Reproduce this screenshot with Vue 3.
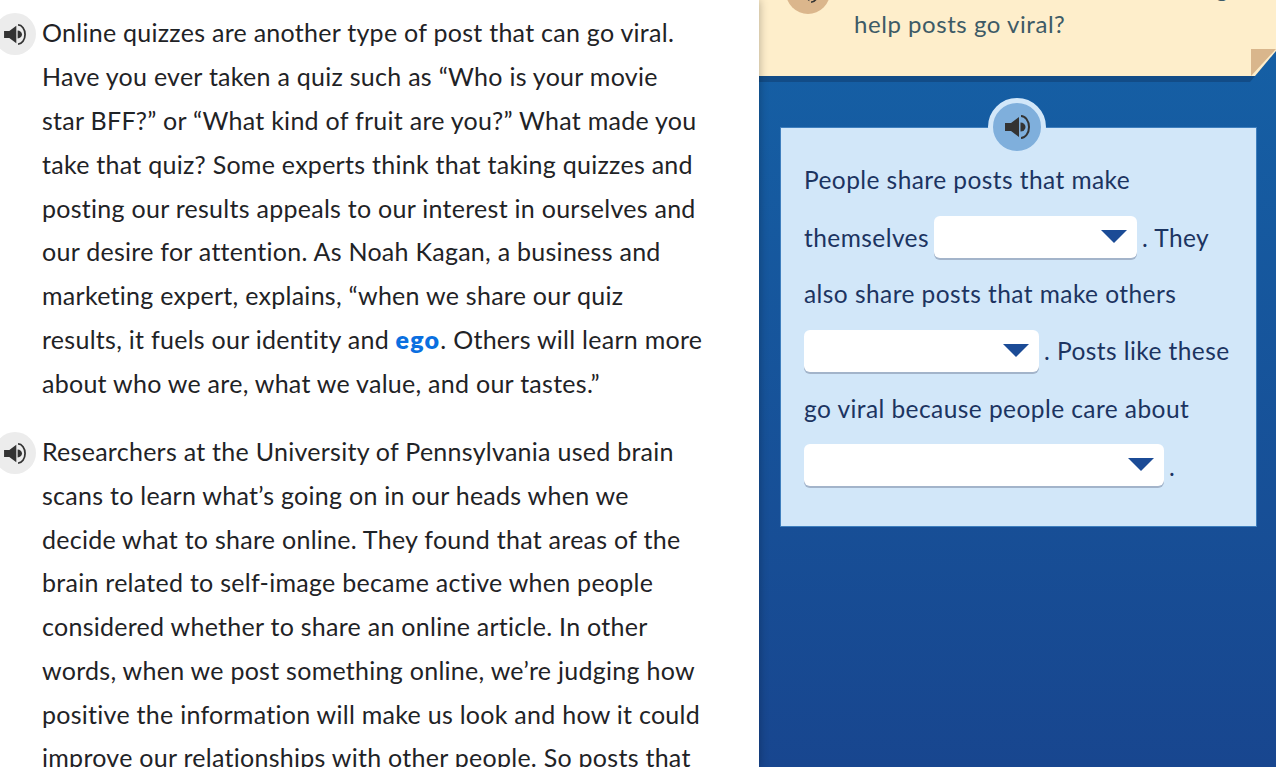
<script setup>
const paragraphs = [
  [
    ['Online quizzes are another type of post that can go viral.'],
    ['Have you ever taken a quiz such as “Who is your movie'],
    ['star BFF?” or “What kind of fruit are you?” What made you'],
    ['take that quiz? Some experts think that taking quizzes and'],
    ['posting our results appeals to our interest in ourselves and'],
    ['our desire for attention. As Noah Kagan, a business and'],
    ['marketing expert, explains, “when we share our quiz'],
    ['results, it fuels our identity and ', 'ego', '. Others will learn more'],
    ['about who we are, what we value, and our tastes.”'],
  ],
  [
    ['Researchers at the University of Pennsylvania used brain'],
    ['scans to learn what’s going on in our heads when we'],
    ['decide what to share online. They found that areas of the'],
    ['brain related to self-image became active when people'],
    ['considered whether to share an online article. In other'],
    ['words, when we post something online, we’re judging how'],
    ['positive the information will make us look and how it could'],
    ['improve our relationships with other people. So posts that'],
  ],
]
const cone = 'M0 8h6l8-6v20l-8-6H0z'
const inner = 'M15.500 7.500a5 4.500 0 0 1 0 9z'
const outer = 'M16 1A8 11 0 0 1 16 23'
</script>

<template>
  <div class="page">
    <main class="reading">
      <div v-for="(lines, i) in paragraphs" :key="i" class="para">
        <button class="audio" type="button" aria-label="Listen">
          <svg viewBox="0 0 25 24" class="spk small"><path :d="cone" /><path :d="inner" /><path class="wave" :d="outer" /></svg>
        </button>
        <p class="text">
          <span v-for="(line, j) in lines" :key="j" class="line">{{ line[0] }}<b v-if="line[1]" class="term">{{ line[1] }}</b>{{ line[2] }}</span>
        </p>
      </div>
    </main>
    <aside class="side">
      <div class="note-wrap">
        <div class="note">
          <div class="note-icon">
            <svg viewBox="0 0 25 24" class="spk small"><path :d="cone" /><path :d="inner" /><path class="wave" :d="outer" /></svg>
          </div>
          <p class="note-text">
            <span class="line">What other emotions or ideas might</span>
            <span class="line">help posts go viral?</span>
          </p>
        </div>
        <div class="fold"></div>
      </div>
      <section class="card">
        <div class="card-audio">
          <svg viewBox="0 0 25 24" class="spk"><path :d="cone" /><path :d="inner" /><path class="wave" :d="outer" /></svg>
        </div>
        <div class="row r1">People share posts that make</div>
        <div class="row r2"><span class="up1">themselves</span><span class="select w1"><i></i></span><span class="up1">. They</span></div>
        <div class="row r3">also share posts that make others</div>
        <div class="row r4"><span class="select w2"><i></i></span><span class="up2">. Posts like these</span></div>
        <div class="row r5">go viral because people care about</div>
        <div class="row r6"><span class="select w3"><i></i></span><span>.</span></div>
      </section>
    </aside>
  </div>
</template>

<style>
html, body { margin: 0; overflow: hidden; background: #fff; }
</style>

<style scoped>
.page {
  display: flex;
  width: 1276px;
  height: 767px;
  overflow: hidden;
  font-family: Lato, "Noto Sans", sans-serif;
  font-size: 25px;
}
.reading {
  width: 759px;
  height: 767px;
  flex: none;
  box-sizing: border-box;
  padding-top: 11px;
  overflow: hidden;
  box-shadow: 0 0 9px rgba(0, 0, 0, .3);
  position: relative;
  z-index: 1;
  background: #fff;
}
.para { display: flex; gap: 6px; margin: 0 0 24.500px -6px; }
.audio {
  flex: none;
  width: 42px;
  height: 42px;
  margin-top: 2px;
  border: 0;
  padding: 0;
  border-radius: 50%;
  background: #ececec;
  display: flex;
  align-items: center;
  justify-content: center;
}
.spk { width: 25px; height: 24px; fill: #333; }
.spk.small { width: 22px; height: 21px; }
.wave { fill: none; stroke: #333; stroke-width: 2; }
.text { margin: 0; color: #1f2326; line-height: 43.880px; letter-spacing: .27px; }
.para + .para .text { line-height: 43.700px; }
.line { display: block; white-space: nowrap; }
.term { color: #0a6fe0; font-weight: 800; letter-spacing: 1.200px; }

.side {
  flex: 1;
  height: 767px;
  overflow: hidden;
  background: linear-gradient(#1561a6, #18468f);
}
.note-wrap {
  position: relative;
  height: 82px;
  background: #124c87;
  clip-path: polygon(0 0, 100% 0, 100% 51px, 491px 82px, 0 82px);
}
.note { display: flex; height: 76px; background: #feeecb; }
.note-icon {
  position: absolute;
  left: 27px;
  top: -30px;
  width: 44px;
  height: 44px;
  border-radius: 50%;
  background: #dbb68c;
  display: flex;
  align-items: center;
  justify-content: center;
}
.note-text {
  margin: -30px 0 0 95px;
  color: #3d5a66;
  line-height: 36px;
  font-size: 24px;
  letter-spacing: .55px;
}
.fold {
  position: absolute;
  right: 0;
  top: 49px;
  width: 25px;
  height: 27px;
  background: #d9b68c;
  clip-path: polygon(0 0, 100% 0, 0 100%);
}
.card {
  position: relative;
  width: 477px;
  height: 400px;
  margin: 45px 0 0 21px;
  box-sizing: border-box;
  border: 1px solid #3f7fbe;
  background: #d2e7f9;
  color: #1c3461;
  padding: 29px 0 0 23px;
  letter-spacing: .43px;
  font-size: 24.500px;
}
.card-audio {
  position: absolute;
  left: 207px;
  top: -30px;
  width: 48px;
  height: 48px;
  border: 5px solid #d2e7f9;
  border-radius: 50%;
  background: #7fafdc;
  display: flex;
  align-items: center;
  justify-content: center;
}
.row { display: flex; align-items: center; gap: 5px; white-space: pre; height: 44px; }
.r2 { margin-top: 15px; }
.r3 { margin-top: 11px; }
.r4 { margin-top: 15px; }
.r5 { margin-top: 12px; }
.r6 { margin-top: 14px; }
.up1 { margin-bottom: 2px; }
.up2 { margin-bottom: 3px; }
.select {
  position: relative;
  display: block;
  height: 42px;
  align-self: flex-start;
  flex: none;
  background: #fff;
  border-radius: 6px;
  box-shadow: 0 2px 0 #a3b4ca;
}
.select i {
  position: absolute;
  right: 10px;
  top: 14px;
  width: 0;
  height: 0;
  border-left: 13px solid transparent;
  border-right: 13px solid transparent;
  border-top: 13px solid #1b4b96;
}
.w1 { width: 203px; }
.w2 { width: 235px; }
.w3 { width: 360px; }
</style>
